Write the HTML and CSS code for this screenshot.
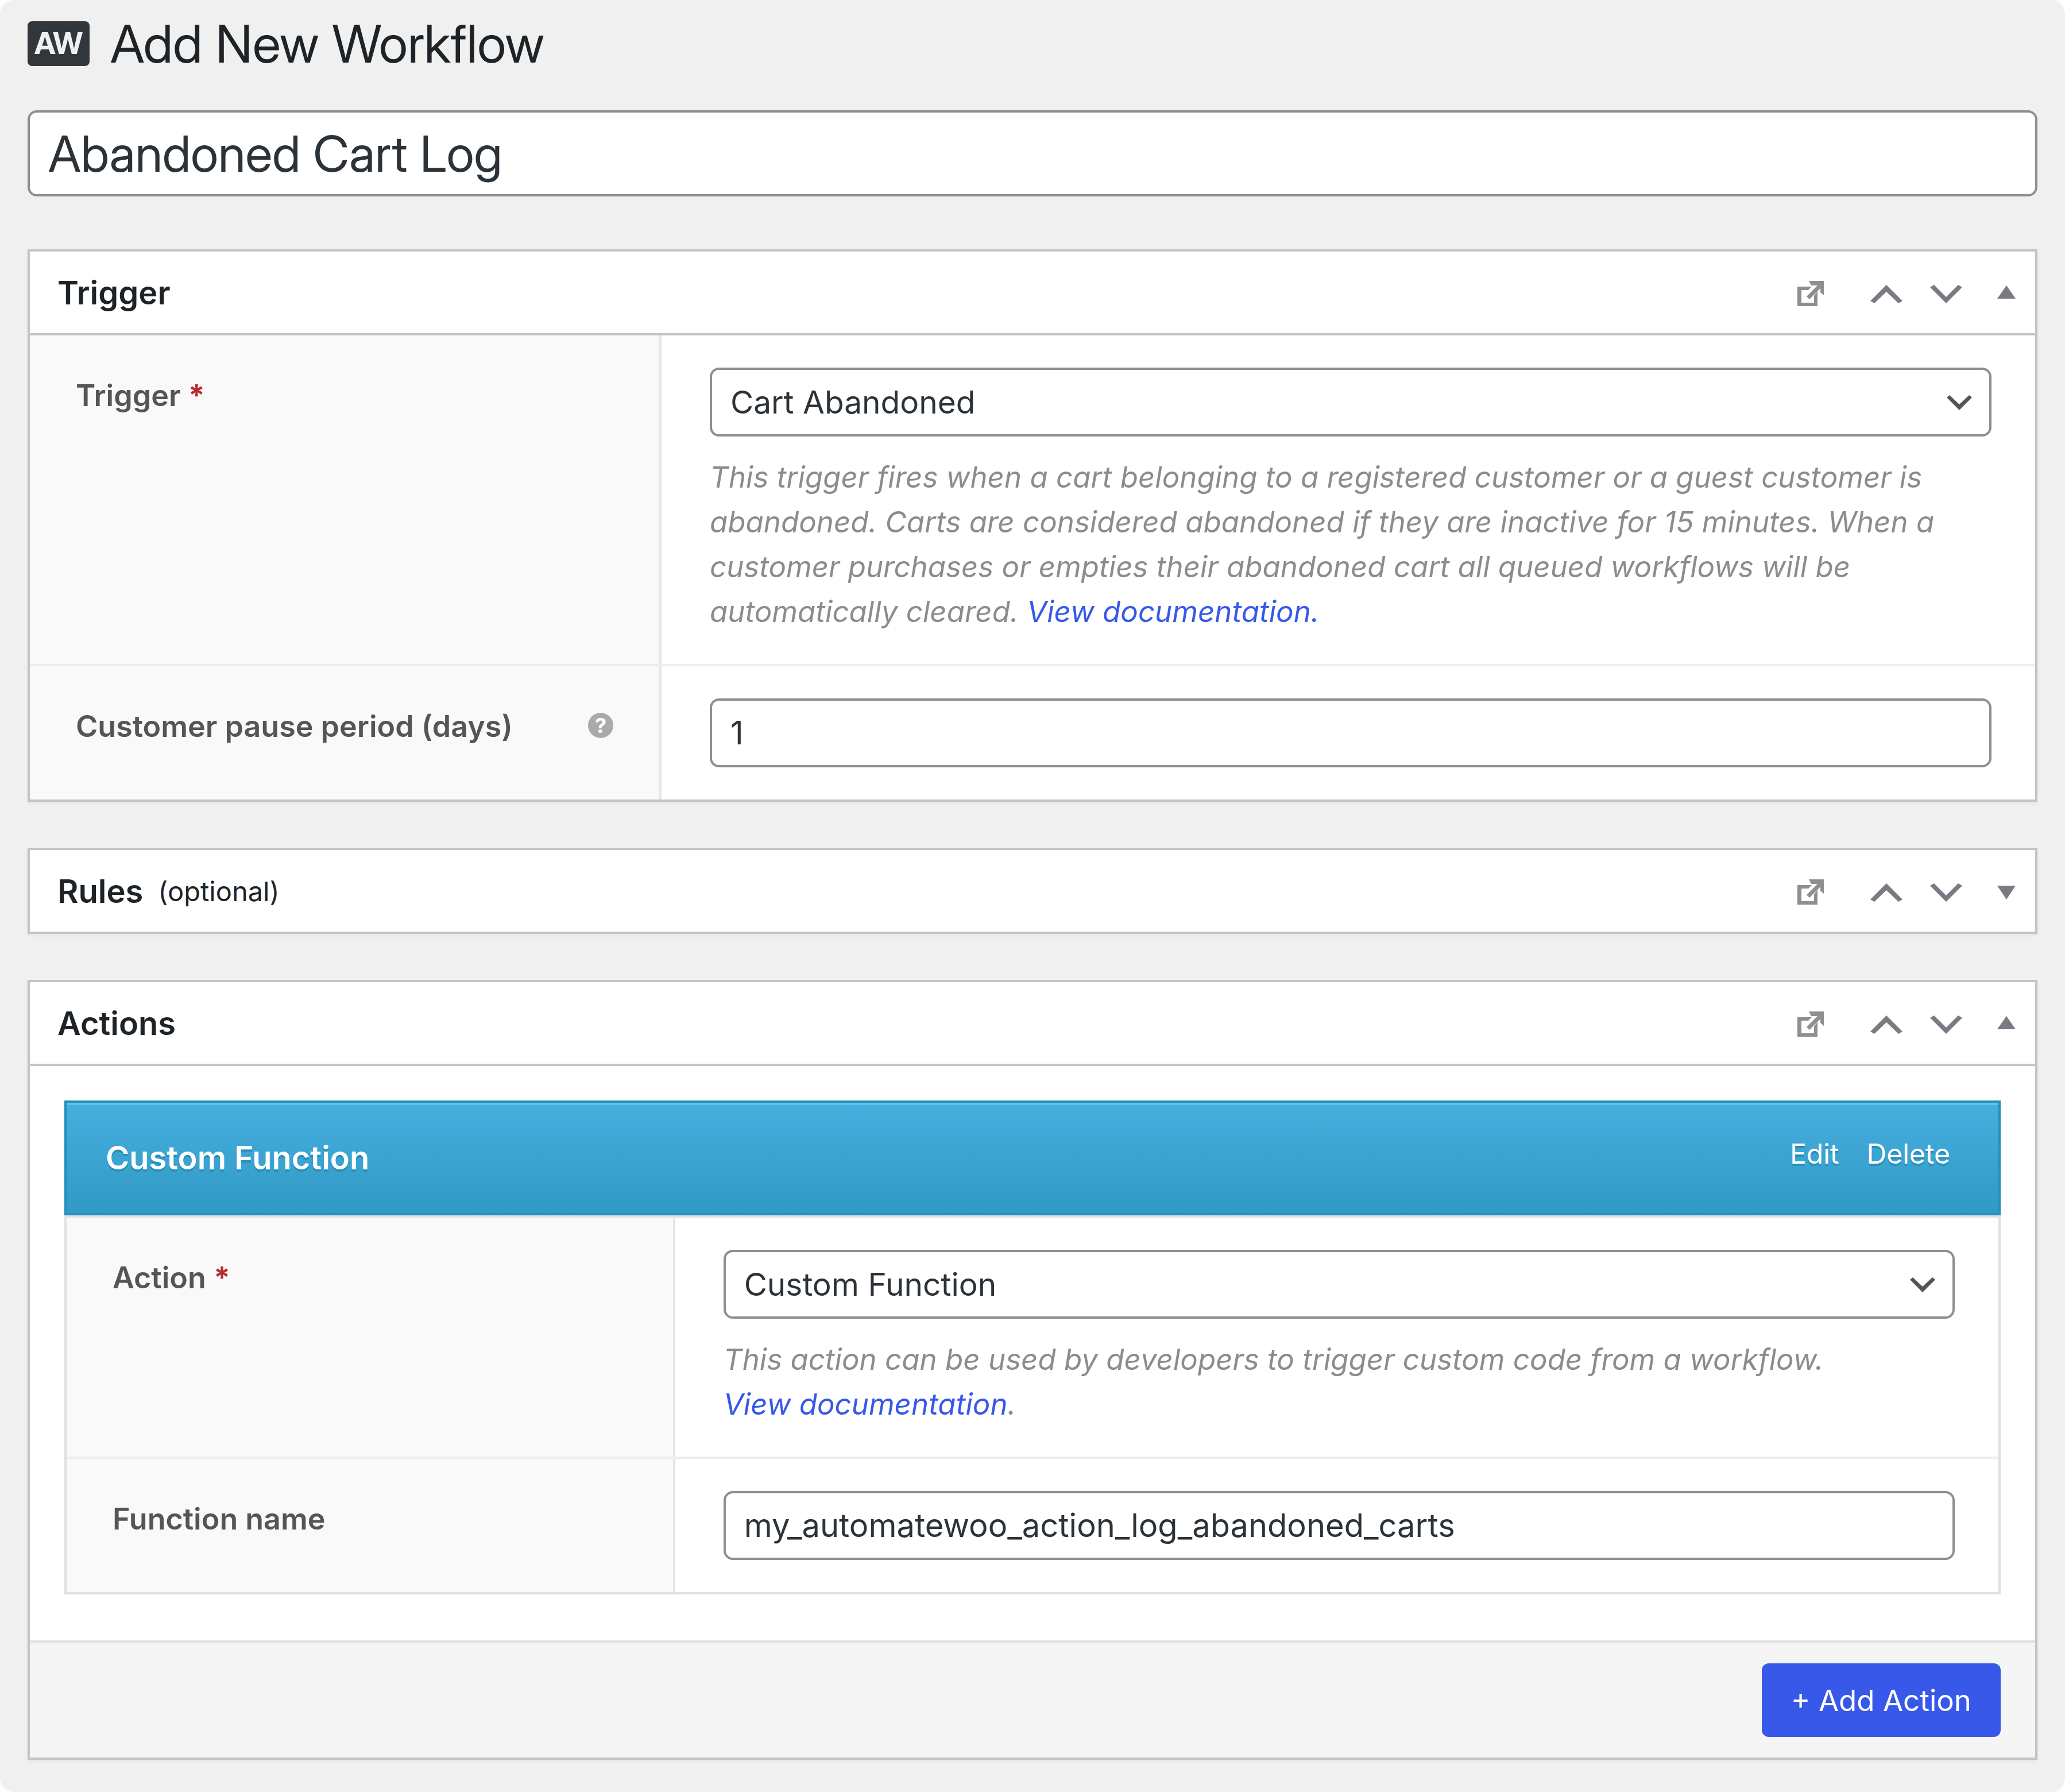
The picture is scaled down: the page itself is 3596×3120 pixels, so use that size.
FILE: index.html
```html
<!DOCTYPE html>
<html lang="en">
<head>
    <meta charset="UTF-8">
    <meta name="viewport" content="width=device-width, initial-scale=1.0">
    <title>Add New Workflow</title>
    <link rel="stylesheet" href="styles.css">
</head>
<body>

    <!-- Shared icons -->
    <svg class="sprite" aria-hidden="true">
        <symbol id="icon-external" viewBox="0 0 48 48">
            <path d="M21 1h26v25l-6-5V14L22 33l-5-5L36 9H25z M26 11l-6 6H8v22h22V27l6-8v26H1V11z"/>
        </symbol>
        <symbol id="icon-up" viewBox="0 0 56 40">
            <path d="M28 4l28 28-7 4-21-20L7 36l-7-4z"/>
        </symbol>
        <symbol id="icon-down" viewBox="0 0 56 40">
            <path d="M28 36L0 8l7-4 21 21L49 4l7 4z"/>
        </symbol>
        <symbol id="icon-open" viewBox="0 0 32 32">
            <path d="M16 4l16 23H0z"/>
        </symbol>
        <symbol id="icon-closed" viewBox="0 0 32 32">
            <path d="M0 7h32L16 31z"/>
        </symbol>
        <symbol id="icon-arrow" viewBox="0 0 44 26">
            <path d="M22 26L0 4l5-4 17 16L39 0l5 4z"/>
        </symbol>
    </svg>

    <div class="page">
        <header class="page-header">
            <span class="logo">AW</span>
            <h1>Add New Workflow</h1>
        </header>

        <input class="title-input" type="text" aria-label="Workflow title" value="Abandoned Cart Log">

        <!-- Trigger -->
        <section class="box">
            <div class="box-header">
                <h2>Trigger</h2>
                <div class="box-buttons">
                    <a class="doc-link" href="#" aria-label="Trigger documentation"><svg class="icon-external"><use href="#icon-external"/></svg></a>
                    <button type="button" aria-label="Move up"><svg class="icon-move"><use href="#icon-up"/></svg></button>
                    <button type="button" aria-label="Move down"><svg class="icon-move"><use href="#icon-down"/></svg></button>
                    <button type="button" aria-label="Toggle panel"><svg class="icon-toggle"><use href="#icon-open"/></svg></button>
                </div>
            </div>
            <div class="row">
                <div class="row-label">
                    <label for="trigger">Trigger <span class="required">*</span></label>
                </div>
                <div class="row-field">
                    <div class="select">
                        <select id="trigger">
                            <option>Cart Abandoned</option>
                        </select>
                        <svg><use href="#icon-arrow"/></svg>
                    </div>
                    <p class="description">This trigger fires when a cart belonging to a registered customer or a guest customer is abandoned. Carts are considered abandoned if they are inactive for 15 minutes. When a customer purchases or empties their abandoned cart all queued workflows will be automatically cleared. <a href="#">View documentation.</a></p>
                </div>
            </div>
            <div class="row">
                <div class="row-label">
                    <label for="pause">Customer pause period (days)</label>
                    <span class="help">?</span>
                </div>
                <div class="row-field">
                    <input id="pause" type="text" value="1">
                </div>
            </div>
        </section>

        <!-- Rules -->
        <section class="box">
            <div class="box-header closed">
                <h2>Rules <small>(optional)</small></h2>
                <div class="box-buttons">
                    <a class="doc-link" href="#" aria-label="Rules documentation"><svg class="icon-external"><use href="#icon-external"/></svg></a>
                    <button type="button" aria-label="Move up"><svg class="icon-move"><use href="#icon-up"/></svg></button>
                    <button type="button" aria-label="Move down"><svg class="icon-move"><use href="#icon-down"/></svg></button>
                    <button type="button" aria-label="Toggle panel"><svg class="icon-toggle"><use href="#icon-closed"/></svg></button>
                </div>
            </div>
        </section>

        <!-- Actions -->
        <section class="box">
            <div class="box-header">
                <h2>Actions</h2>
                <div class="box-buttons">
                    <a class="doc-link" href="#" aria-label="Actions documentation"><svg class="icon-external"><use href="#icon-external"/></svg></a>
                    <button type="button" aria-label="Move up"><svg class="icon-move"><use href="#icon-up"/></svg></button>
                    <button type="button" aria-label="Move down"><svg class="icon-move"><use href="#icon-down"/></svg></button>
                    <button type="button" aria-label="Toggle panel"><svg class="icon-toggle"><use href="#icon-open"/></svg></button>
                </div>
            </div>
            <div class="actions">
                <div class="action-header">
                    <h3>Custom Function</h3>
                    <div class="action-links">
                        <a href="#">Edit</a>
                        <a href="#">Delete</a>
                    </div>
                </div>
                <div class="action-fields">
                    <div class="row">
                        <div class="row-label">
                            <label for="action">Action <span class="required">*</span></label>
                        </div>
                        <div class="row-field">
                            <div class="select">
                                <select id="action">
                                    <option>Custom Function</option>
                                </select>
                                <svg><use href="#icon-arrow"/></svg>
                            </div>
                            <p class="description">This action can be used by developers to trigger custom code from a workflow.<br><a href="#">View documentation</a>.</p>
                        </div>
                    </div>
                    <div class="row">
                        <div class="row-label">
                            <label for="function-name">Function name</label>
                        </div>
                        <div class="row-field">
                            <input id="function-name" type="text" value="my_automatewoo_action_log_abandoned_carts">
                        </div>
                    </div>
                </div>
            </div>
            <footer class="box-footer">
                <button type="button" class="add-button">+ Add Action</button>
            </footer>
        </section>
    </div>

</body>
</html>
```

FILE: styles.css
```css
* {
    box-sizing: border-box;
}

html {
    background: #fff;
}

body {
    margin: 0;
    font-family: Inter, Roboto, sans-serif;
    font-size: 52px;
    line-height: 78px;
    color: #3c434a;
}

h1, h2, h3, p {
    margin: 0;
}

a {
    color: #3858e9;
    text-decoration: none;
}

input, select, button {
    font-family: inherit;
}

.sprite {
    display: none;
}

.page {
    min-height: 100vh;
    padding: 16px 48px 56px;
    background: #f0f0f0;
    border-radius: 24px;
}

.page-header {
    display: flex;
    align-items: center;
    gap: 36px;
    margin-bottom: 56px;
}
.page-header h1 {
    font-family: "Inter Display", Inter, sans-serif;
    font-size: 91px;
    font-weight: 400;
    font-variation-settings: "opsz" 32;
    line-height: 120px;
    color: #1d2327;
}
.logo {
    width: 108px;
    height: 78px;
    border-radius: 8px;
    background: #32373c;
    color: #f0f0f0;
    font-family: "Inter Display", Inter, sans-serif;
    font-size: 52px;
    font-weight: 700;
    font-variation-settings: "opsz" 32;
    text-align: center;
}

/* Inputs */
.title-input, .row-field input, .row-field select {
    display: block;
    width: 100%;
    height: 120px;
    padding: 0 32px;
    border: 4px solid #8c8f94;
    border-radius: 16px;
    background: #fff;
    color: #2c3338;
    font-size: 56px;
}
.title-input {
    height: 150px;
    margin-bottom: 92px;
    font-family: "Inter Display", Inter, sans-serif;
    font-size: 87px;
    font-variation-settings: "opsz" 32;
}
.select {
    position: relative;
}
.row-field select {
    appearance: none;
    font-size: 55px;
}
.select svg {
    position: absolute;
    top: 50%;
    right: 34px;
    width: 44px;
    height: 26px;
    margin-top: -12px;
    fill: #555;
    pointer-events: none;
}

/* Boxes */
.box {
    margin-bottom: 80px;
    border: 4px solid #c3c4c7;
    background: #fff;
    box-shadow: 0 4px 4px rgba(0, 0, 0, 0.04);
}
.box:last-child {
    margin-bottom: 0;
}
.box-header {
    display: flex;
    justify-content: space-between;
    align-items: center;
    height: 146px;
    padding-left: 48px;
    border-bottom: 4px solid #c3c4c7;
}
.box-header.closed {
    height: 142px;
    border-bottom: none;
}
.box-header h2 {
    display: flex;
    align-items: center;
    gap: 26px;
    padding-top: 2px;
    font-size: 56px;
    font-weight: 600;
    color: #1d2327;
}
.box-header small {
    font-size: 47px;
    font-weight: 400;
}
.box-buttons {
    display: flex;
}
.box-buttons button, .doc-link {
    display: flex;
    justify-content: center;
    align-items: center;
    width: 104px;
    height: 104px;
    padding: 0;
    border: none;
    background: none;
    fill: #787c82;
}
.box-buttons .doc-link {
    margin-right: 28px;
    fill: #8f8f8f;
}
.icon-external {
    width: 48px;
    height: 48px;
    margin: 5px 0 0 2px;
}
.icon-move {
    width: 56px;
    height: 40px;
    margin: 6px 0 0 1px;
}
.icon-toggle {
    width: 32px;
    height: 32px;
    margin-left: 4px;
}

/* Field rows */
.row {
    display: grid;
    grid-template-columns: 31.5% 1fr;
    border-bottom: 4px solid #eee;
}
.row:last-child {
    border-bottom: none;
}
.row-label {
    display: flex;
    justify-content: space-between;
    align-items: flex-start;
    padding: 66px 80px 0;
    border-right: 4px solid #e6e6e6;
    background: #f9f9f9;
    color: #555;
    font-weight: 600;
}
.required {
    color: #b32d2e;
    font-weight: 700;
}
.help {
    width: 44px;
    height: 44px;
    margin-top: 15px;
    border-radius: 50%;
    background: #aaa;
    color: #fff;
    font-size: 36px;
    font-weight: 700;
    line-height: 44px;
    text-align: center;
}
.row-field {
    padding: 56px 76px 56px 84px;
}
.description {
    margin: 32px 0 -4px;
    color: #8c8c8c;
    font-size: 51px;
    font-style: italic;
}

/* Action */
.actions {
    padding: 60px 60px 80px;
}
.action-header {
    display: flex;
    justify-content: space-between;
    align-items: center;
    height: 200px;
    padding: 0 84px 0 68px;
    border: 4px solid #278fbc;
    background: linear-gradient(#46afde, #3199c5);
    box-shadow: inset 0 4px 0 #5cc5f2;
    color: #fff;
    text-shadow: 0 4px 0 #268fbb;
}
.action-header h3 {
    font-size: 56px;
    font-weight: 600;
}
.action-links {
    display: flex;
    gap: 48px;
    padding-bottom: 14px;
    font-size: 48px;
}
.action-links a {
    color: #fff;
}
.action-fields {
    border: 4px solid #e1e1e1;
}

.box-footer {
    display: flex;
    justify-content: flex-end;
    padding: 36px 60px;
    border-top: 4px solid #e1e1e1;
    background: #f5f5f5;
}
.add-button {
    height: 128px;
    padding: 0 51px;
    border: none;
    border-radius: 12px;
    background: #3858e9;
    color: #fff;
    font-size: 51px;
    cursor: pointer;
}
```
